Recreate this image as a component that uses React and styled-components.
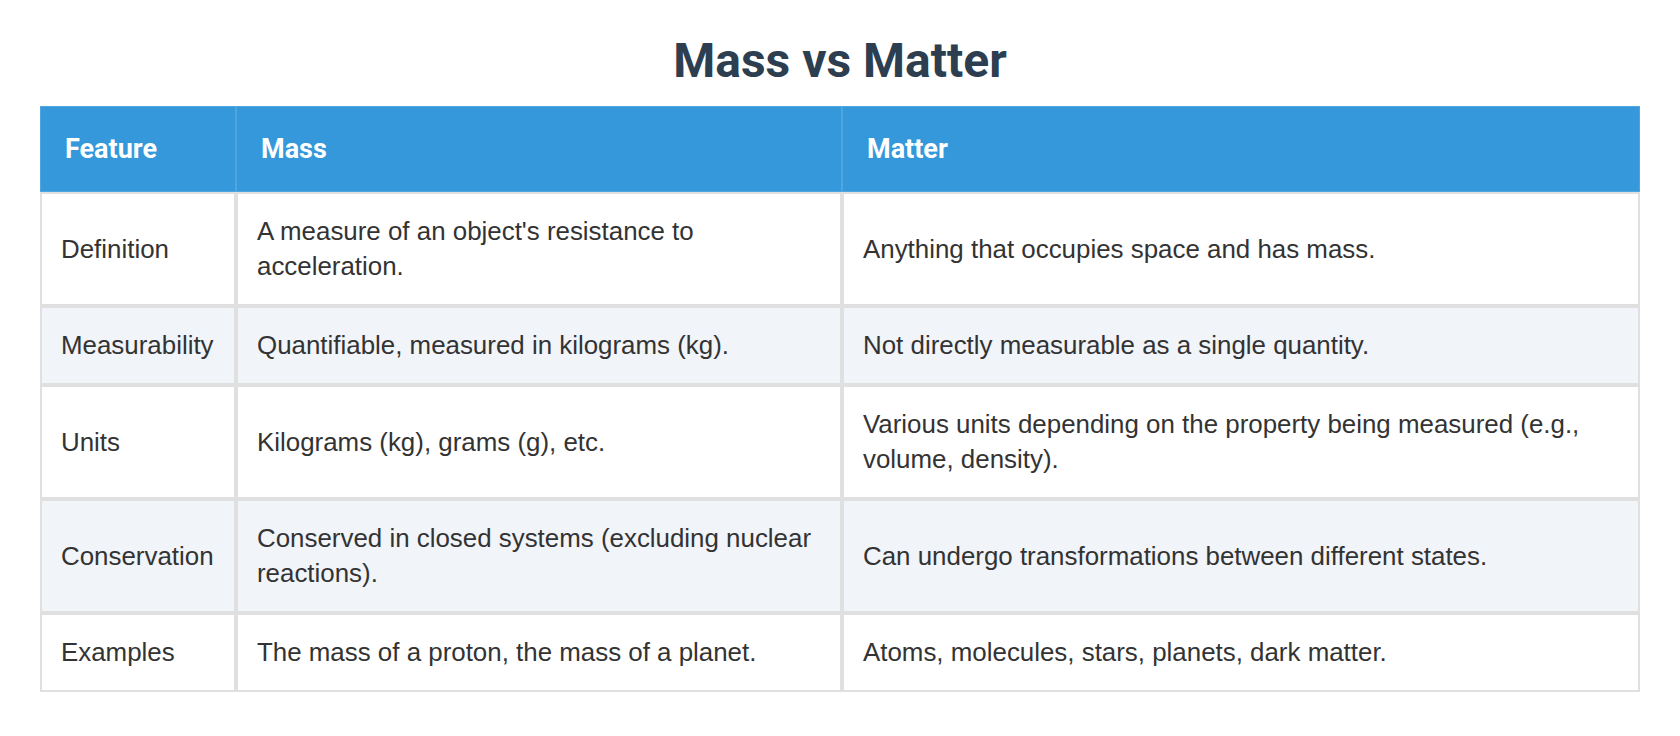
import React from "react";
import styled, { createGlobalStyle } from "styled-components";

const GlobalStyle = createGlobalStyle`
  html, body { margin: 0; padding: 0; background: #ffffff; }
  * { box-sizing: border-box; }
`;

const Page = styled.div`
  padding: 33px 40px 40px;
  font-family: "Liberation Sans", Arial, sans-serif;
  color: #333333;
`;

const Title = styled.h1`
  margin: 0 0 17px;
  text-align: center;
  font-family: Roboto, "Liberation Sans", sans-serif;
  font-weight: 700;
  font-size: 48px;
  line-height: 56px;
  color: #2c3e50;
`;

const Table = styled.table`
  width: 100%;
  table-layout: fixed;
  border-collapse: separate;
  border-spacing: 0;
`;

const Col = styled.col`
  width: ${(p) => p.$w};
`;

const HeadCell = styled.th`
  background: #3498db;
  color: #ffffff;
  text-align: left;
  font-family: Roboto, "Liberation Sans", sans-serif;
  font-weight: 700;
  font-size: 27px;
  line-height: 38px;
  padding: 23px 22px 23px 24px;
  border: 1px solid #4ea5e0;
`;

const Row = styled.tr`
  background: ${(p) => (p.$alt ? "#f1f4f9" : "#ffffff")};
`;

const Cell = styled.td`
  font-size: 25.9px;
  line-height: 35px;
  padding: 20px 19px;
  border: 2px solid #e0e0e0;
  vertical-align: middle;
  color: #333333;
`;

const rows = [
  ["Definition", "A measure of an object's resistance to acceleration.", "Anything that occupies space and has mass."],
  ["Measurability", "Quantifiable, measured in kilograms (kg).", "Not directly measurable as a single quantity."],
  ["Units", "Kilograms (kg), grams (g), etc.", "Various units depending on the property being measured (e.g., volume, density)."],
  ["Conservation", "Conserved in closed systems (excluding nuclear reactions).", "Can undergo transformations between different states."],
  ["Examples", "The mass of a proton, the mass of a planet.", "Atoms, molecules, stars, planets, dark matter."],
];

export default function App() {
  return (
    <>
      <GlobalStyle />
      <Page>
        <Title>Mass vs Matter</Title>
        <Table>
          <colgroup>
            <Col $w="196px" />
            <Col $w="606px" />
            <Col $w="auto" />
          </colgroup>
          <thead>
            <tr>
              <HeadCell>Feature</HeadCell>
              <HeadCell>Mass</HeadCell>
              <HeadCell>Matter</HeadCell>
            </tr>
          </thead>
          <tbody>
            {rows.map((r, i) => (
              <Row key={r[0]} $alt={i % 2 === 1}>
                <Cell>{r[0]}</Cell>
                <Cell>{r[1]}</Cell>
                <Cell>{r[2]}</Cell>
              </Row>
            ))}
          </tbody>
        </Table>
      </Page>
    </>
  );
}
